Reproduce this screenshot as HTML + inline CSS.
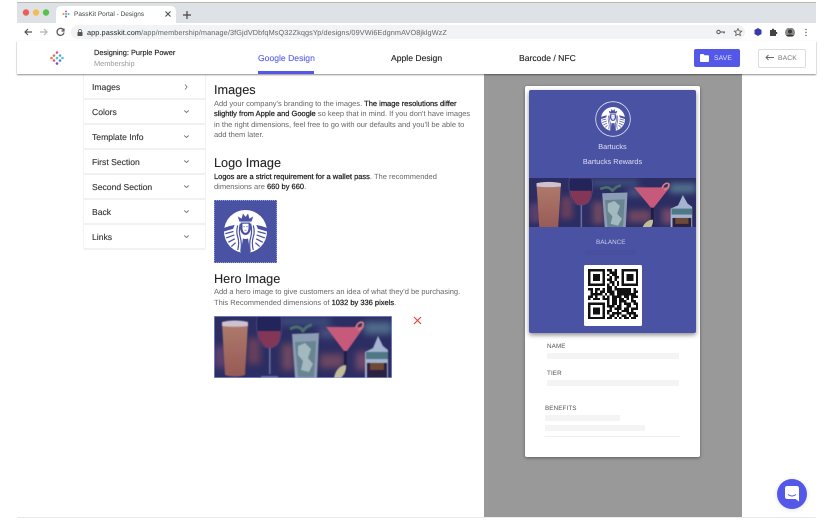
<!DOCTYPE html>
<html><head><meta charset="utf-8"><title>PassKit Portal - Designs</title>
<style>
html,body{margin:0;padding:0;background:#fff}
body{width:833px;height:521px;position:relative;overflow:hidden;font-family:"Liberation Sans",sans-serif;color:#222;text-rendering:geometricPrecision;filter:blur(.3px)}
.a{position:absolute;white-space:nowrap}
.item{position:absolute;left:84px;width:121px;height:23px;background:#fff;border-bottom:2px solid #f1f1f1;font-size:8.6px;line-height:25px;color:#333;text-indent:8px;-webkit-text-stroke:.12px #333}
.p{font-size:7.5px;line-height:10.5px;color:#666}
.p b{font-weight:400;color:#222;-webkit-text-stroke:.25px #222}
h2{position:absolute;margin:0;font-weight:400;font-size:12.7px;line-height:16px;color:#222;left:214px;white-space:nowrap;-webkit-text-stroke:.1px #222}
.bar{position:absolute;background:#f4f4f4}
.lbl{position:absolute;font-size:6.3px;color:#555;white-space:nowrap;letter-spacing:.1px}
.nav{font-size:8.6px;line-height:12px;-webkit-text-stroke:.12px currentColor}
</style></head><body>
<svg width="0" height="0" style="position:absolute">
<defs>
<symbol id="logo" viewBox="0 0 100 100">
<circle cx="50" cy="50" r="50" fill="#fff"/>
<path d="M36 27l-4-12 9 5 3-12 6 8 6-8 3 12 9-5-4 12z" fill="#4a52a3"/>
<path d="M-1 42C8 39 16 36 25 35l-4 9L0 50zM101 42c-9-3-17-6-26-7l4 9 21 6z" fill="#4a52a3"/>
<path d="M3 55l19-5M5 65l19-7M10 75l15-8M17 85l10-9M97 55l-19-5M95 65l-19-7M90 75l-15-8M83 85l-10-9" stroke="#4a52a3" stroke-width="3" fill="none"/>
<path d="M32 36c-3 10-3 18 0 27 3 9 3 17 0 30M38 32c-3 12-3 22 0 32 3 10 3 20 1 33M68 36c3 10 3 18 0 27-3 9-3 17 0 30M62 32c3 12 3 22 0 32-3 10-3 20-1 33" fill="none" stroke="#4a52a3" stroke-width="2.800"/>
<path d="M39 29h22l2 14c-2 9-6 15-13 15s-11-6-13-15z" fill="#4a52a3"/>
<path d="M43 32h14v11c-1 6-3 10-7 10s-6-4-7-10z" fill="#fff"/>
<path d="M45 39h3.500M51.500 39h3.500M47.500 47h5" stroke="#4a52a3" stroke-width="1.600"/>
<path d="M44 66c4 2 8 2 12 0l5 34H39z" fill="#4a52a3"/>
</symbol>
<linearGradient id="beer" x1="0" y1="0" x2="0" y2="1"><stop offset="0" stop-color="#b07c6c"/><stop offset="1" stop-color="#965a56"/></linearGradient>
<filter id="bl" x="-20%" y="-20%" width="140%" height="140%"><feGaussianBlur stdDeviation="3.500"/></filter>
<symbol id="hero" viewBox="0 0 178 62" preserveAspectRatio="none">
<rect width="178" height="62" fill="#2c2d62"/>
<g filter="url(#bl)">
<rect x="0" y="30" width="14" height="22" fill="#5c3f6e"/>
<rect x="34" y="22" width="12" height="26" fill="#6b3f5c"/>
<rect x="68" y="28" width="12" height="26" fill="#6e4a62"/>
<rect x="105" y="12" width="18" height="10" fill="#46507e"/>
<rect x="106" y="38" width="24" height="14" fill="#6e4660"/>
<rect x="150" y="6" width="28" height="12" fill="#4f6d8c"/>
<rect x="142" y="36" width="12" height="18" fill="#75496a"/>
<rect x="66" y="2" width="50" height="7" fill="#3f4f80"/>
</g>
<path d="M8 7c8-3 18-3 26 0l-3 52c-6 2-14 2-20 0z" fill="url(#beer)"/>
<path d="M8 6c8-2 18-2 26 0v4c-8 1-18 1-26 0z" fill="#cdc2d0"/>
<path d="M43 0h24c1 10 1 20-2 26-3 5-6 6-9 6-4 0-7-1-10-6-3-6-4-16-3-26z" fill="#23245a" stroke="#55588f" stroke-width=".6"/>
<path d="M43.600 15h23c0 5-1 8-2 11-3 5-6 6-8.500 6s-6-1-9-6c-2-3-3-6-3.500-11z" fill="#843656"/>
<path d="M55 32h1.600v26H55zM47 60h17v2H47z" fill="#6a6ea0"/>
<path d="M78 18l27-1-2 45H81z" fill="#8a9db4"/>
<path d="M81 26l21-1-2 36H84z" fill="#6a8592"/>
<path d="M84 30l7-3 6 6-3 9 5 6-4 8-8-2 2-9-5-6z" fill="#a3b9c0"/>
<path d="M76 13c6-3 10-3 14 3M88 16c3-4 6-7 10-7" stroke="#49706d" stroke-width="3" fill="none"/>
<path d="M112 11h38l-17 24h-3z" fill="#c75a7b"/>
<path d="M130 35h3v21h-3z" fill="#1d1e45"/>
<path d="M120 62c1-7 6-13 12-13 1 5-2 10-5 13z" fill="#c0bb98"/>
<path d="M142 12c1-5 5-7 7-5 1 3-2 6-5 7" stroke="#dc7f84" stroke-width="1.800" fill="none"/>
<path d="M151 36l8-4 5-12 5 10 5 4v28h-23z" fill="#a3b3d0"/>
<rect x="152" y="36" width="22" height="7" fill="#4f7886"/>
<rect x="153" y="47" width="20" height="15" fill="#2c2140"/>
<path d="M156 47h14v7h-14z" fill="#6d4936"/>
</symbol>
</defs>
</svg>

<!-- browser chrome -->
<div class="a" style="left:17px;top:2px;width:799px;height:1px;background:#b9b9ae"></div>
<div class="a" style="left:17px;top:3px;width:799px;height:20px;background:#dee1e6"></div>
<div class="a" style="left:56px;top:6px;width:120px;height:17px;background:#fff;border-radius:5px 5px 0 0"></div>
<svg class="a" style="left:17px;top:3px" width="60" height="20"><circle cx="9" cy="9.500" r="3.200" fill="#ed5f56"/><circle cx="19" cy="9.500" r="3.200" fill="#f5bd4f"/><circle cx="29" cy="9.500" r="3.200" fill="#58c14b"/></svg>
<svg class="a" style="left:62px;top:10px" width="8" height="8"><circle cx="4" cy="1.500" r="1" fill="#e64a8a"/><circle cx="1.500" cy="4" r="1" fill="#f0883e"/><circle cx="6.500" cy="4" r="1" fill="#38b6d8"/><circle cx="4" cy="6.500" r="1" fill="#7a5be0"/><circle cx="4" cy="4" r="1" fill="#48c78e"/></svg>
<div class="a" style="left:74px;top:10px;font-size:6.500px;line-height:9px;color:#444">PassKit Portal - Designs</div>
<svg class="a" style="left:165px;top:11px" width="6" height="6"><path d="M.5.5l5 5M5.500.5l-5 5" stroke="#444" stroke-width="1"/></svg>
<svg class="a" style="left:183px;top:11px" width="8" height="8"><path d="M4 0v8M0 4h8" stroke="#444" stroke-width="1.200"/></svg>
<div class="a" style="left:17px;top:23px;width:799px;height:18px;background:#fff"></div>
<div class="a" style="left:71px;top:25px;width:674px;height:14px;background:#f1f3f4;border-radius:7px"></div>
<svg class="a" style="left:23px;top:27px" width="44" height="10" fill="none" stroke-width="1.200"><path d="M9 5H2M5 2L2 5l3 3" stroke="#555"/><path d="M17 5h7M21 2l3 3-3 3" stroke="#b5b5b5"/><path d="M40.500 3a3.500 3.500 0 1 0 .5 2.500M41 1.500V4h-2.500" stroke="#555"/></svg>
<svg class="a" style="left:77px;top:29px" width="6" height="7"><rect x=".5" y="3" width="5" height="4" rx=".5" fill="#555"/><path d="M1.500 3V2a1.500 1.500 0 0 1 3 0v1" fill="none" stroke="#555" stroke-width=".7"/></svg>
<div class="a" style="left:87px;top:27.500px;font-size:7.300px;line-height:9px;color:#666;letter-spacing:.09px"><span style="color:#222">app.passkit.com</span>/app/membership/manage/3fGjdVDbfqMsQ32ZkqgsYp/designs/09VWi6EdgnmAVO8jklgWzZ</div>
<svg class="a" style="left:716px;top:28px" width="96" height="9">
<circle cx="2.500" cy="4" r="1.700" fill="none" stroke="#555"/><path d="M4 4h5M8 4v1.500" stroke="#555"/>
<path d="M22 .5l1.100 2.400 2.600.3-1.900 1.700.5 2.600-2.300-1.300-2.300 1.300.5-2.600-1.900-1.700 2.600-.3z" fill="none" stroke="#555" stroke-width=".8"/>
<path d="M42 0l3.500 2v4L42 8l-3.500-2V2z" fill="#3a3aa8"/>
<path d="M54 2h2V.8h2V2h2v2h1.200v2H60v2h-6z" fill="#444"/>
<circle cx="74" cy="4.500" r="5" fill="#8a8a84"/><circle cx="74" cy="3.500" r="2" fill="#3c3a38"/><path d="M70 8c1-2 7-2 8 0z" fill="#3c3a38"/>
<circle cx="90" cy="1.500" r=".7" fill="#555"/><circle cx="90" cy="4.500" r=".7" fill="#555"/><circle cx="90" cy="7.500" r=".7" fill="#555"/>
</svg>

<!-- app header -->
<div class="a" style="left:17px;top:41px;width:799px;height:33px;background:#fff;box-shadow:0 1px 1.500px rgba(0,0,0,.45);z-index:3"></div>
<div style="position:absolute;left:0;top:0;z-index:4;width:833px;height:80px">
<svg class="a" style="left:50px;top:51px" width="14" height="14">
<circle cx="7" cy="1.500" r="1.300" fill="#e94a8f"/><circle cx="4" cy="4.500" r="1.300" fill="#f06a5a"/><circle cx="10" cy="4.500" r="1.300" fill="#3db4e6"/><circle cx="1.500" cy="7" r="1.300" fill="#f0793e"/><circle cx="7" cy="7" r="1.300" fill="#4ec7b0"/><circle cx="12.500" cy="7" r="1.300" fill="#53c4d8"/><circle cx="4" cy="9.500" r="1.300" fill="#e9508a"/><circle cx="10" cy="9.500" r="1.300" fill="#5a7be8"/><circle cx="7" cy="12.500" r="1.300" fill="#7a4be0"/>
</svg>
<div class="a" style="left:94px;top:47px;font-size:7.400px;line-height:11px;color:#222;-webkit-text-stroke:.15px #222">Designing: Purple Power</div>
<div class="a" style="left:94px;top:58px;font-size:7.400px;line-height:11px;color:#999">Membership</div>
<div class="a nav" style="left:258px;top:52px;color:#5a5ee8">Google Design</div>
<div class="a" style="left:258px;top:71px;width:56px;height:3px;background:#5458e8"></div>
<div class="a nav" style="left:391px;top:52px;color:#222">Apple Design</div>
<div class="a nav" style="left:519px;top:52px;color:#222">Barcode / NFC</div>
<div class="a" style="left:694px;top:49px;width:46px;height:18px;background:#5458e8;border-radius:2px"></div>
<svg class="a" style="left:700px;top:54px" width="9" height="8"><path d="M0 1.200C0 .5.400 0 1 0h2.500l1 1.200H8c.6 0 1 .4 1 1V7c0 .6-.4 1-1 1H1c-.6 0-1-.4-1-1z" fill="#fff"/></svg>
<div class="a" style="left:714px;top:54px;font-size:6.800px;line-height:9px;color:#dfe0fb;letter-spacing:.1px">SAVE</div>
<div class="a" style="left:758px;top:49px;width:46px;height:17px;background:#fff;border:1px solid #dcdcdc;border-radius:2px"></div>
<svg class="a" style="left:765px;top:54px" width="9" height="7"><path d="M9 3.500H1M3.500 1L1 3.500 3.500 6" fill="none" stroke="#666" stroke-width=".9"/></svg>
<div class="a" style="left:778px;top:53.500px;font-size:6.800px;line-height:9px;color:#777;letter-spacing:.1px">BACK</div>
</div>

<!-- grey panel -->
<div class="a" style="left:484px;top:74px;width:258px;height:443px;background:#999"></div>
<div class="a" style="left:17px;top:517px;width:799px;height:1px;background:#e9e9e9"></div>

<!-- sidebar -->
<div class="a" style="left:84px;top:74px;width:121px;height:175px;box-shadow:0 0 1.500px rgba(0,0,0,.18)"></div>
<div class="item" style="top:75px">Images</div>
<div class="item" style="top:100px">Colors</div>
<div class="item" style="top:125px">Template Info</div>
<div class="item" style="top:150px">First Section</div>
<div class="item" style="top:175px">Second Section</div>
<div class="item" style="top:200px">Back</div>
<div class="item" style="top:225px">Links</div>
<svg class="a" style="left:182px;top:82px" width="8" height="160" fill="none" stroke="#777" stroke-width=".9">
<path d="M3 2.500l2 2.500-2 2.500"/>
<path d="M2.200 28.500l2.300 2 2.300-2M2.200 53.500l2.300 2 2.300-2M2.200 78.500l2.300 2 2.300-2M2.200 103.500l2.300 2 2.300-2M2.200 128.500l2.300 2 2.300-2M2.200 153.500l2.300 2 2.300-2"/>
</svg>

<!-- content -->
<h2 style="top:82px">Images</h2>
<div class="a p" style="left:214px;top:98.500px">Add your company's branding to the images. <b>The image resolutions differ<br>slightly from Apple and Google</b> so keep that in mind. If you don't have images<br>in the right dimensions, feel free to go with our defaults and you'll be able to<br>add them later.</div>
<h2 style="top:155px">Logo Image</h2>
<div class="a p" style="left:214px;top:171.500px"><b>Logos are a strict requirement for a wallet pass</b>. The recommended<br>dimensions are <b>660 by 660</b>.</div>
<div class="a" style="left:214px;top:200px;width:63px;height:63px;background:#4a52a3;outline:1px dotted #8fa0e8;outline-offset:-1px"></div>
<svg class="a" style="left:223.500px;top:209.500px" width="43" height="43"><use href="#logo"/></svg>
<h2 style="top:271px">Hero Image</h2>
<div class="a p" style="left:214px;top:287px">Add a hero image to give customers an idea of what they'd be purchasing.<br>This Recommended dimensions of <b>1032 by 336 pixels</b>.</div>
<svg class="a" style="left:214px;top:316px" width="178" height="62"><g style="filter:blur(.4px)"><use href="#hero" width="178" height="62"/></g><rect x=".5" y=".5" width="177" height="61" fill="none" stroke="#7d90e8" stroke-dasharray="1 1"/></svg>
<svg class="a" style="left:413px;top:316px" width="9" height="9"><path d="M1 1l7 7M8 1L1 8" stroke="#e4483f" stroke-width="1.200"/></svg>

<!-- phone card -->
<div class="a" style="left:525px;top:86px;width:175px;height:371px;background:#fff;border-radius:2px;box-shadow:0 1px 3px rgba(0,0,0,.4)"></div>
<div class="a" style="left:529px;top:90px;width:167px;height:243px;background:#4a52a3;border-radius:2px;box-shadow:0 2px 5px rgba(0,0,0,.45)"></div>
<svg class="a" style="left:595px;top:101px" width="36" height="36"><circle cx="18" cy="18" r="17.300" fill="none" stroke="#e6e7f4" stroke-width=".8"/><svg x="6" y="6" width="24" height="24"><use href="#logo"/></svg></svg>
<div class="a" style="left:529px;width:167px;top:142px;text-align:center;font-size:7.300px;line-height:10px;color:#dfe0f2">Bartucks</div>
<div class="a" style="left:529px;width:167px;top:156.500px;text-align:center;font-size:7.300px;line-height:10px;color:#dfe0f2">Bartucks Rewards</div>
<svg class="a" style="left:529px;top:178px" width="167" height="49"><use href="#hero" width="178" height="62" transform="scale(.938 .85)"/></svg>
<div class="a" style="left:596px;top:238.500px;font-size:6.300px;line-height:8px;color:#c9cbe8">BALANCE</div>
<div class="a" style="left:585px;top:250px;width:51px;height:5px;background:#474f9e;border-radius:1px"></div>
<div class="a" style="left:584px;top:265px;width:58px;height:60.500px;background:#fff;border-radius:1.500px"></div>
<svg class="a" style="left:588px;top:269px" width="50.400" height="50.400" viewBox="0 0 21 21" shape-rendering="crispEdges"><path fill="none" stroke="#111" stroke-width="1" d="M0 .5h7M14 .5h7M0 1.500h1M6 1.500h1M14 1.500h1M20 1.500h1M0 2.500h1M2 2.500h3M6 2.500h1M14 2.500h1M16 2.500h3M20 2.500h1M0 3.500h1M2 3.500h3M6 3.500h1M14 3.500h1M16 3.500h3M20 3.500h1M0 4.500h1M2 4.500h3M6 4.500h1M14 4.500h1M16 4.500h3M20 4.500h1M0 5.500h1M6 5.500h1M14 5.500h1M20 5.500h1M0 6.500h7M14 6.500h7M8 .5h2M11 .5h1M9 1.500h3M8 2.500h1M10 2.500h2M9 3.500h1M11 3.500h2M8 4.500h2M11 4.500h1M9 5.500h2M12 5.500h1M8 6.500h1M10 6.500h1M12 6.500h1M8 7.500h2M11 7.500h1M0 8.500h2M3 8.500h2M6 8.500h1M8 8.500h2M11 8.500h7M19 8.500h1M1 9.500h1M3 9.500h1M5 9.500h2M8 9.500h3M12 9.500h6M19 9.500h2M1 10.500h5M7 10.500h1M9 10.500h2M12 10.500h8M0 11.500h2M3 11.500h1M6 11.500h1M8 11.500h1M10 11.500h4M15 11.500h2M18 11.500h3M0 12.500h1M2 12.500h3M6 12.500h3M10 12.500h2M13 12.500h2M16 12.500h1M18 12.500h1M8 13.500h1M10 13.500h2M13 13.500h3M18 13.500h2M0 14.500h7M8 14.500h1M10 14.500h2M13 14.500h1M15 14.500h3M19 14.500h2M0 15.500h1M6 15.500h1M8 15.500h3M12 15.500h2M16 15.500h2M20 15.500h1M0 16.500h1M2 16.500h3M6 16.500h1M9 16.500h1M11 16.500h3M15 16.500h2M18 16.500h3M0 17.500h1M2 17.500h3M6 17.500h1M8 17.500h2M12 17.500h1M14 17.500h3M18 17.500h1M0 18.500h1M2 18.500h3M6 18.500h1M8 18.500h1M10 18.500h4M16 18.500h4M0 19.500h1M6 19.500h1M9 19.500h2M12 19.500h1M14 19.500h2M17 19.500h1M19 19.500h2M0 20.500h7M8 20.500h2M11 20.500h1M13 20.500h1M15 20.500h2M18 20.500h2"/></svg>

<div class="lbl" style="left:547px;top:342.500px">NAME</div>
<div class="bar" style="left:547px;top:353px;width:132px;height:6px"></div>
<div class="lbl" style="left:547px;top:369.500px">TIER</div>
<div class="bar" style="left:547px;top:380px;width:132px;height:6px"></div>
<div class="lbl" style="left:545px;top:404.500px">BENEFITS</div>
<div class="bar" style="left:545px;top:415px;width:75px;height:6px"></div>
<div class="bar" style="left:545px;top:425px;width:100px;height:6px"></div>
<div class="bar" style="left:545px;top:436px;width:135px;height:1px;background:#eee"></div>

<!-- chat -->
<div class="a" style="left:777px;top:479px;width:30px;height:30px;border-radius:50%;background:#5458e8;box-shadow:0 1px 5px rgba(0,0,0,.12)"></div>
<svg class="a" style="left:785px;top:486px" width="14" height="16"><path d="M2 0h10c1.100 0 2 .9 2 2v13.500L10.500 13H2c-1.100 0-2-.9-2-2V2C0 .9.900 0 2 0z" fill="#fff"/><path d="M3 8.500c2.500 2 5.500 2 8 0" fill="none" stroke="#5458e8" stroke-width="1"/></svg>
</body></html>
